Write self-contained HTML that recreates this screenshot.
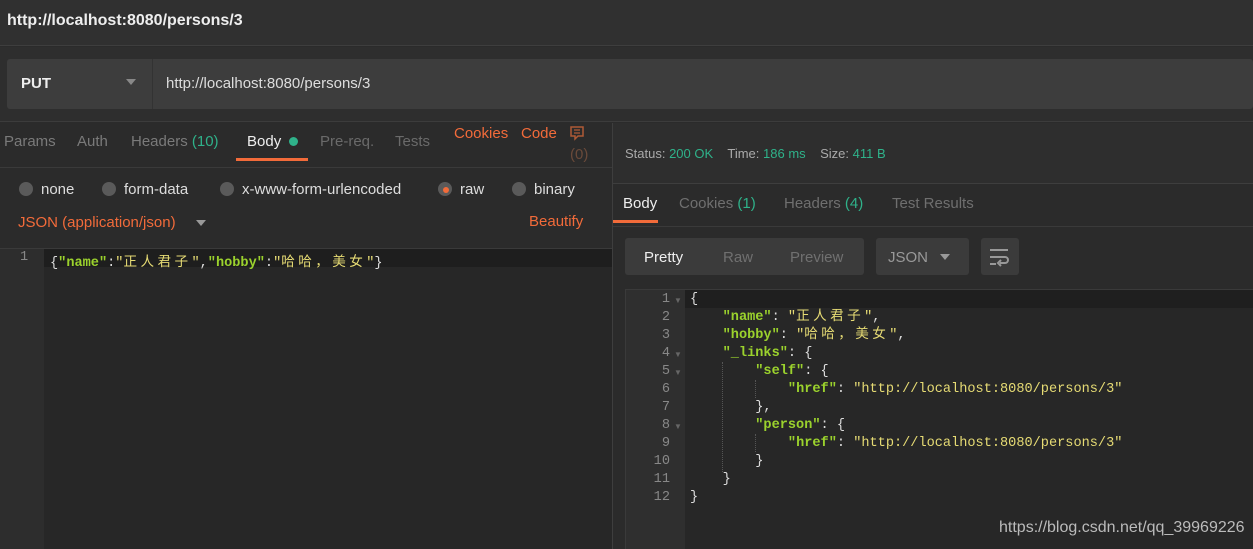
<!DOCTYPE html>
<html><head><meta charset="utf-8"><style>
*{margin:0;padding:0;box-sizing:border-box}
body{width:1253px;height:549px;background:#2b2b2b;font-family:"Liberation Sans","Noto Sans CJK SC",sans-serif;color:#ccc;position:relative;overflow:hidden;font-size:15px}
.a{position:absolute;white-space:nowrap}
.mono{font-family:"Liberation Mono","Noto Sans CJK SC",monospace;font-size:13.6px}
.k{color:#9bd22d;font-weight:bold}
.s{color:#e6db74}
.c{letter-spacing:3.4px}
.g{color:#2fb28a}
.o{color:#f26b3a}
.rd{position:absolute;width:14px;height:14px;border-radius:50%;background:#5a5a5a}
</style></head><body>
<div class="a" style="left:0;top:0;width:1253px;height:46px;background:#303030;border-bottom:1px solid #3e3e3e"></div>
<div class="a" style="left:7px;top:12px;font-size:16px;font-weight:bold;color:#eee">http://localhost:8080/persons/3</div>
<div class="a" style="left:0;top:47px;width:1253px;height:75px;background:#2e2e2e;border-bottom:1px solid #3c3c3c"></div>
<div class="a" style="left:7px;top:59px;width:1246px;height:50px;background:#3d3d3d;border-radius:3px"></div>
<div class="a" style="left:152px;top:59px;width:1px;height:50px;background:#333"></div>
<div class="a" style="left:21px;top:75px;font-weight:bold;color:#eee">PUT</div>
<div class="a" style="left:126px;top:79px;width:0;height:0;border-left:5px solid transparent;border-right:5px solid transparent;border-top:6px solid #888"></div>
<div class="a" style="left:166px;top:75px;color:#ddd">http://localhost:8080/persons/3</div>

<div class="a" style="left:0;top:123px;width:612px;height:426px;background:#2b2b2b"></div>
<div class="a" style="left:612px;top:123px;width:1px;height:426px;background:#3e3e3e"></div>
<div class="a" style="left:4px;top:133px;color:#7a7a7a">Params</div>
<div class="a" style="left:77px;top:133px;color:#7a7a7a">Auth</div>
<div class="a" style="left:131px;top:133px;color:#7a7a7a">Headers <span class="g">(10)</span></div>
<div class="a" style="left:247px;top:133px;color:#eee">Body</div>
<div class="a" style="left:289px;top:137px;width:9px;height:9px;border-radius:50%;background:#2fb28a"></div>
<div class="a" style="left:236px;top:158px;width:72px;height:3px;background:#f26b3a"></div>
<div class="a" style="left:320px;top:133px;color:#6a6a6a">Pre-req.</div>
<div class="a" style="left:395px;top:133px;color:#6a6a6a">Tests</div>
<div class="a o" style="left:454px;top:125px">Cookies</div>
<div class="a o" style="left:521px;top:125px">Code</div>
<svg class="a" style="left:569px;top:125px" width="16" height="16" viewBox="0 0 16 16"><path d="M2 2h12v9H9l-3 3v-3H2z" fill="none" stroke="#b05a36" stroke-width="1.5"/><path d="M5 5h6M5 8h6" stroke="#b05a36" stroke-width="1.3"/></svg>
<div class="a" style="left:570px;top:146px;color:#6a4a3a">(0)</div>
<div class="a" style="left:0;top:167px;width:612px;height:1px;background:#3a3a3a"></div>

<div class="rd" style="left:19px;top:182px"></div><div class="a" style="left:41px;top:181px;color:#ddd">none</div>
<div class="rd" style="left:102px;top:182px"></div><div class="a" style="left:124px;top:181px;color:#ddd">form-data</div>
<div class="rd" style="left:220px;top:182px"></div><div class="a" style="left:242px;top:181px;color:#ddd">x-www-form-urlencoded</div>
<div class="rd" style="left:438px;top:182px"></div><div class="a" style="left:443px;top:187px;width:6px;height:6px;border-radius:50%;background:#f26b3a"></div><div class="a" style="left:460px;top:181px;color:#ddd">raw</div>
<div class="rd" style="left:512px;top:182px"></div><div class="a" style="left:534px;top:181px;color:#ddd">binary</div>
<div class="a o" style="left:18px;top:214px">JSON (application/json)</div>
<div class="a" style="left:196px;top:220px;border-left:5px solid transparent;border-right:5px solid transparent;border-top:6px solid #999"></div>
<div class="a o" style="left:529px;top:213px">Beautify</div>

<div class="a" style="left:0;top:248px;width:612px;height:301px;background:#272727;border-top:1px solid #3a3a3a"></div>
<div class="a" style="left:0;top:249px;width:44px;height:300px;background:#2d2d2d"></div>
<div class="a" style="left:44px;top:249px;width:568px;height:18px;background:#1e1e1e"></div>
<div class="a mono" style="left:20px;top:250px;color:#888">1</div>
<div class="a mono" style="left:50px;top:250px;color:#ddd">{<span class="k">"name"</span>:<span class="s">"<span class="c">正人君子</span>"</span>,<span class="k">"hobby"</span>:<span class="s">"<span class="c">哈哈，美女</span>"</span>}</div>

<div class="a" style="left:613px;top:123px;width:640px;height:61px;background:#2e2e2e;border-bottom:1px solid #3e3e3e"></div>
<div class="a" style="left:625px;top:146px;font-size:13px;color:#aaa">Status: <span class="g">200 OK</span>&nbsp;&nbsp;&nbsp; Time: <span class="g">186 ms</span>&nbsp;&nbsp;&nbsp; Size: <span class="g">411 B</span></div>
<div class="a" style="left:623px;top:195px;color:#eee">Body</div>
<div class="a" style="left:679px;top:195px;color:#6f6f6f">Cookies <span class="g">(1)</span></div>
<div class="a" style="left:784px;top:195px;color:#6f6f6f">Headers <span class="g">(4)</span></div>
<div class="a" style="left:892px;top:195px;color:#6f6f6f">Test Results</div>
<div class="a" style="left:613px;top:220px;width:45px;height:3px;background:#f26b3a"></div>
<div class="a" style="left:613px;top:226px;width:640px;height:1px;background:#3a3a3a"></div>
<div class="a" style="left:625px;top:238px;width:239px;height:37px;background:#3b3b3b;border-radius:3px"></div>
<div class="a" style="left:644px;top:249px;color:#eee">Pretty</div>
<div class="a" style="left:723px;top:249px;color:#707070">Raw</div>
<div class="a" style="left:790px;top:249px;color:#707070">Preview</div>
<div class="a" style="left:876px;top:238px;width:93px;height:37px;background:#3b3b3b;border-radius:3px"></div>
<div class="a" style="left:888px;top:249px;color:#999">JSON</div>
<div class="a" style="left:940px;top:254px;border-left:5px solid transparent;border-right:5px solid transparent;border-top:6px solid #999"></div>
<div class="a" style="left:981px;top:238px;width:38px;height:37px;background:#3b3b3b;border-radius:3px"></div>
<svg class="a" style="left:988px;top:246px" width="24" height="22" viewBox="0 0 24 22"><path d="M2 4h18M2 11h15a3 3 0 0 1 0 6h-5M2 18h6" fill="none" stroke="#999" stroke-width="2"/><path d="M13 14l-3 3 3 3" fill="none" stroke="#999" stroke-width="2"/></svg>

<div class="a" style="left:625px;top:289px;width:628px;height:260px;background:#272727;border-top:1px solid #3a3a3a;border-left:1px solid #3a3a3a"></div>
<div class="a" style="left:626px;top:290px;width:59px;height:259px;background:#2f2f2f"></div>
<div class="a" style="left:685px;top:290px;width:568px;height:18px;background:#1f1f1f"></div>
<div class="a mono" style="left:626px;top:291px;width:44px;text-align:right;color:#888;line-height:18px">1<br>2<br>3<br>4<br>5<br>6<br>7<br>8<br>9<br>10<br>11<br>12</div>
<div class="a" style="left:674px;top:292px;color:#666;font-size:8px;line-height:18px">▼<br><br><br>▼<br>▼<br><br><br>▼</div>
<div class="a" style="left:722px;top:362px;height:110px;border-left:1px dotted #555"></div>
<div class="a" style="left:755px;top:380px;height:18px;border-left:1px dotted #555"></div>
<div class="a" style="left:755px;top:434px;height:18px;border-left:1px dotted #555"></div>
<pre class="a mono" style="left:690px;top:291px;line-height:18px;color:#ddd;white-space:pre">{
    <span class="k">"name"</span>: <span class="s">"<span class="c">正人君子</span>"</span>,
    <span class="k">"hobby"</span>: <span class="s">"<span class="c">哈哈，美女</span>"</span>,
    <span class="k">"_links"</span>: {
        <span class="k">"self"</span>: {
            <span class="k">"href"</span>: <span class="s">"http://localhost:8080/persons/3"</span>
        },
        <span class="k">"person"</span>: {
            <span class="k">"href"</span>: <span class="s">"http://localhost:8080/persons/3"</span>
        }
    }
}</pre>
<div class="a" style="left:999px;top:519px;font-size:16px;color:#bbb">https://blog.csdn.net/qq_39969226</div>
</body></html>
